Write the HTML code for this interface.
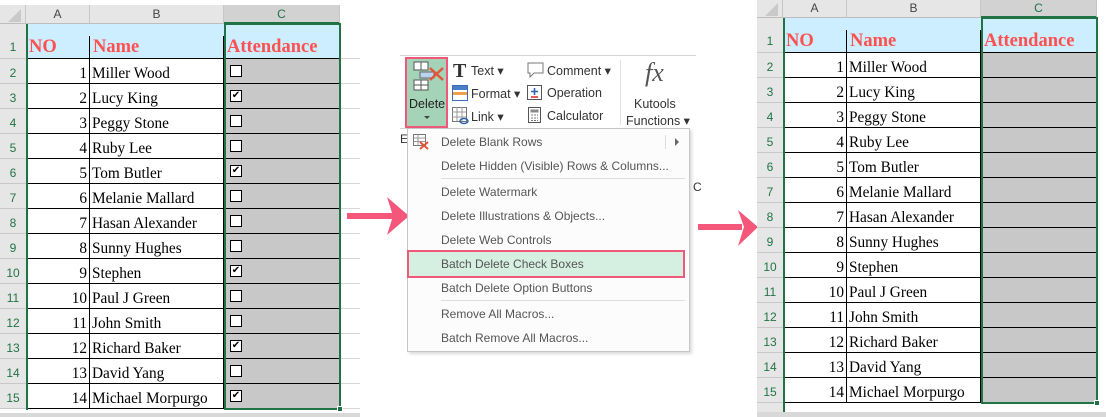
<!DOCTYPE html>
<html><head><meta charset="utf-8">
<style>
*{margin:0;padding:0;box-sizing:border-box}
body{width:1106px;height:417px;background:#fff;position:relative;overflow:hidden;font-family:"Liberation Sans",sans-serif}
.sheet{position:absolute;width:360px;height:420px;overflow:hidden}
.ch{position:absolute;top:5px;height:19px;background:#e6e6e6;border-right:1px solid #c6c6c6;border-bottom:1px solid #bdbdbd;font-size:12px;color:#444;text-align:center;line-height:19px}
.rh{position:absolute;left:0;width:26px;height:25px;line-height:29px;background:#e6e6e6;border-bottom:1px solid #c8c8c8;font-size:12px;color:#217346;text-align:center}
.grid{position:absolute;left:26px;top:24px;width:314px;font-family:"Liberation Serif",serif;font-size:15.3px}
.r{display:flex;height:25px;border-bottom:1px solid #000;line-height:29px;white-space:nowrap}
.r>div{border-right:1px solid #000;overflow:hidden;padding:0 2px 0 2px}
.r .a{width:64px;text-align:right}
.r .b{width:134px}
.r .c{width:116px;background:#c8c8c8;line-height:24px}
.r.h{height:35px;background:#cdeeff;color:#ff5050;font-weight:bold;font-size:18.5px;line-height:22px;align-items:flex-end;padding-bottom:0}
.r.h>div{padding-left:3px;text-align:left;background:#cdeeff;line-height:22px}
.cb{display:inline-block;width:12px;height:12px;border:1px solid #000;background:#fff;vertical-align:middle;margin-left:4px;margin-top:-1px;font-size:10px;line-height:10px;text-align:center;font-family:"DejaVu Sans",sans-serif}
.sel{position:absolute;left:224px;top:23px;width:117px;height:387px;border:2px solid #217346}
.gl{position:absolute;left:26px;top:24px;width:2px;height:386px;background:#217346}
.mi{position:absolute;left:441px;font-size:12px;color:#555}
.rb{position:absolute;font-size:12.5px;color:#333}
</style></head><body>

<!-- LEFT SHEET -->
<div class="sheet" style="left:0;top:0;height:412px">
  <div style="position:absolute;left:0;top:5px;width:26px;height:19px;background:#e6e6e6;border-right:1px solid #c6c6c6;border-bottom:1px solid #bdbdbd"></div>
  <div style="position:absolute;left:8px;top:9px;width:0;height:0;border-left:13px solid transparent;border-bottom:13px solid #c9c9c9"></div>
  <div class="ch" style="left:26px;width:64px">A</div>
  <div class="ch" style="left:90px;width:134px">B</div>
  <div class="ch" style="left:224px;width:116px;background:#d2d2d2;color:#217346;border-bottom:2px solid #217346">C</div>
  <div style="position:absolute;left:340px;top:24px;width:20px;height:390px;background:repeating-linear-gradient(#fff 0 24px,#d8d8d8 24px 25px);background-position:0 10px"></div>
  <div class="rh" style="top:24px;height:35px;line-height:46px">1</div>
  <div class="rh" style="top:59px">2</div>
  <div class="rh" style="top:84px">3</div>
  <div class="rh" style="top:109px">4</div>
  <div class="rh" style="top:134px">5</div>
  <div class="rh" style="top:159px">6</div>
  <div class="rh" style="top:184px">7</div>
  <div class="rh" style="top:209px">8</div>
  <div class="rh" style="top:234px">9</div>
  <div class="rh" style="top:259px">10</div>
  <div class="rh" style="top:284px">11</div>
  <div class="rh" style="top:309px">12</div>
  <div class="rh" style="top:334px">13</div>
  <div class="rh" style="top:359px">14</div>
  <div class="rh" style="top:384px">15</div>
  <div class="grid">
    <div class="r h"><div class="a">NO</div><div class="b">Name</div><div class="c">Attendance</div></div>
    <div class="r"><div class="a">1</div><div class="b">Miller Wood</div><div class="c"><span class="cb"></span></div></div>
    <div class="r"><div class="a">2</div><div class="b">Lucy King</div><div class="c"><span class="cb">✔</span></div></div>
    <div class="r"><div class="a">3</div><div class="b">Peggy Stone</div><div class="c"><span class="cb"></span></div></div>
    <div class="r"><div class="a">4</div><div class="b">Ruby Lee</div><div class="c"><span class="cb"></span></div></div>
    <div class="r"><div class="a">5</div><div class="b">Tom Butler</div><div class="c"><span class="cb">✔</span></div></div>
    <div class="r"><div class="a">6</div><div class="b">Melanie Mallard</div><div class="c"><span class="cb"></span></div></div>
    <div class="r"><div class="a">7</div><div class="b">Hasan Alexander</div><div class="c"><span class="cb"></span></div></div>
    <div class="r"><div class="a">8</div><div class="b">Sunny Hughes</div><div class="c"><span class="cb"></span></div></div>
    <div class="r"><div class="a">9</div><div class="b">Stephen</div><div class="c"><span class="cb">✔</span></div></div>
    <div class="r"><div class="a">10</div><div class="b">Paul J Green</div><div class="c"><span class="cb"></span></div></div>
    <div class="r"><div class="a">11</div><div class="b">John Smith</div><div class="c"><span class="cb"></span></div></div>
    <div class="r"><div class="a">12</div><div class="b">Richard Baker</div><div class="c"><span class="cb">✔</span></div></div>
    <div class="r"><div class="a">13</div><div class="b">David Yang</div><div class="c"><span class="cb"></span></div></div>
    <div class="r"><div class="a">14</div><div class="b">Michael Morpurgo</div><div class="c"><span class="cb">✔</span></div></div>
  </div>
  <div class="gl"></div>
  <div class="sel"></div>
  <div style="position:absolute;left:337px;top:406px;width:6px;height:6px;background:#217346;border:1px solid #fff"></div>
</div>
<div style="position:absolute;left:0;top:413px;width:360px;height:4px;background:#d8d8d8"></div>

<!-- LEFT ARROW -->
<svg style="position:absolute;left:340px;top:190px" width="80" height="50"><rect x="7" y="23" width="48" height="6" fill="#f5577a"/><path d="M47 7 L69 26 L47 45 L53 26 Z" fill="#f5577a"/></svg>

<!-- MIDDLE RIBBON -->
<div style="position:absolute;left:400px;top:55px;width:296px;height:1px;background:#d4d4d4"></div>
<div style="position:absolute;left:400px;top:128px;width:8px;height:1px;background:#d4d4d4"></div>
<div style="position:absolute;left:400px;top:132px;font-size:12px;color:#333">E</div>
<div style="position:absolute;left:405px;top:57px;width:43px;height:71px;background:#a5d3b7;border:2px solid #f0587a"></div>
<svg style="position:absolute;left:410px;top:60px" width="36" height="34"><rect x="4" y="2" width="14" height="8" fill="#fff" stroke="#555"/><line x1="11" y1="2" x2="11" y2="10" stroke="#555"/><rect x="10" y="12" width="14" height="6" fill="#b9d3f0" stroke="#666"/><rect x="4" y="20" width="14" height="10" fill="#fff" stroke="#555"/><line x1="11" y1="20" x2="11" y2="30" stroke="#555"/><line x1="4" y1="25" x2="18" y2="25" stroke="#555"/><path d="M20 8 L33 20 M33 8 L20 20" stroke="#e2563a" stroke-width="2.5"/></svg>
<div style="position:absolute;left:409px;top:97px;font-size:12.5px;color:#222">Delete</div>
<div style="position:absolute;left:424px;top:116px;width:0;height:0;border-left:3px solid transparent;border-right:3px solid transparent;border-top:3px solid #444"></div>

<div style="position:absolute;left:453px;top:60px;font-family:'Liberation Serif',serif;font-weight:bold;font-size:20px;color:#333">T</div>
<div class="rb" style="left:471px;top:63px">Text ▾</div>
<svg style="position:absolute;left:452px;top:85px" width="16" height="16"><rect x="0.5" y="0.5" width="15" height="15" fill="#fff" stroke="#3a6fb8"/><rect x="1" y="1" width="14" height="4" fill="#4a7fc8"/><rect x="1" y="7" width="14" height="3" fill="#f2a04a"/></svg>
<div class="rb" style="left:471px;top:86px">Format ▾</div>
<svg style="position:absolute;left:452px;top:107px" width="18" height="18"><rect x="0.5" y="0.5" width="14" height="14" fill="#fff" stroke="#777"/><path d="M5 0v14M10 0v14M0 5h14M0 10h14" stroke="#999"/><ellipse cx="12" cy="14" rx="4" ry="2.5" fill="none" stroke="#2a62b5" stroke-width="1.5"/></svg>
<div class="rb" style="left:471px;top:109px">Link ▾</div>
<svg style="position:absolute;left:527px;top:62px" width="18" height="16"><path d="M1 1h15v10H7l-4 4v-4H1z" fill="#fff" stroke="#777"/></svg>
<div class="rb" style="left:547px;top:63px">Comment ▾</div>
<svg style="position:absolute;left:527px;top:85px" width="16" height="16"><rect x="0.5" y="0.5" width="14" height="14" fill="#fff" stroke="#555"/><path d="M7.5 3v7M4 6.5h7" stroke="#2a62b5" stroke-width="1.6"/><path d="M4 12h7" stroke="#d33" stroke-width="1.6"/></svg>
<div class="rb" style="left:547px;top:86px">Operation</div>
<svg style="position:absolute;left:528px;top:107px" width="14" height="17"><rect x="0.5" y="0.5" width="12" height="15" fill="#fff" stroke="#555"/><rect x="2.5" y="2.5" width="8" height="3" fill="#888"/><path d="M3 8h2M6 8h2M9 8h1M3 11h2M6 11h2M9 11h1M3 13.5h2M6 13.5h2M9 13.5h1" stroke="#777"/></svg>
<div class="rb" style="left:547px;top:109px">Calculator</div>
<div style="position:absolute;left:620px;top:60px;width:1px;height:65px;background:#e0e0e0"></div>
<div style="position:absolute;left:645px;top:58px;font-family:'Liberation Serif',serif;font-style:italic;font-size:26px;color:#555">fx</div>
<div class="rb" style="left:634px;top:97px">Kutools</div>
<div class="rb" style="left:626px;top:113px">Functions ▾</div>
<div style="position:absolute;left:693px;top:180px;font-size:12px;color:#333">C</div>

<!-- MENU -->
<div style="position:absolute;left:407px;top:128px;width:283px;height:224px;background:#fcfcfc;border:1px solid #c6c6c6;box-shadow:2px 2px 3px rgba(0,0,0,.15)"></div>
<svg style="position:absolute;left:412px;top:133px" width="20" height="18"><rect x="1.5" y="1.5" width="12" height="11" fill="#fff" stroke="#777"/><path d="M1.5 5h12M1.5 8.5h12M6 1.5v11" stroke="#999"/><path d="M8 9l8 7M16 9l-8 7" stroke="#e2563a" stroke-width="2"/></svg>
<div style="position:absolute;left:665px;top:135px;width:1px;height:14px;background:#ddd"></div>
<div style="position:absolute;left:675px;top:138px;width:0;height:0;border-top:4px solid transparent;border-bottom:4px solid transparent;border-left:4px solid #666"></div>
<div class="mi" style="top:135px">Delete Blank Rows</div>
<div class="mi" style="top:159px">Delete Hidden (Visible) Rows &amp; Columns...</div>
<div style="position:absolute;left:441px;top:178px;width:244px;height:1px;background:#ddd"></div>
<div class="mi" style="top:185px">Delete Watermark</div>
<div class="mi" style="top:209px">Delete Illustrations &amp; Objects...</div>
<div class="mi" style="top:233px">Delete Web Controls</div>
<div style="position:absolute;left:407px;top:250px;width:278px;height:28px;background:#d5efe0;border:2px solid #f0587a"></div>
<div class="mi" style="top:257px">Batch Delete Check Boxes</div>
<div class="mi" style="top:281px">Batch Delete Option Buttons</div>
<div style="position:absolute;left:441px;top:300px;width:244px;height:1px;background:#ddd"></div>
<div class="mi" style="top:307px">Remove All Macros...</div>
<div class="mi" style="top:331px">Batch Remove All Macros...</div>

<!-- RIGHT ARROW -->
<svg style="position:absolute;left:690px;top:200px" width="75" height="55"><rect x="8" y="24" width="44" height="6" fill="#f5577a"/><path d="M48 10 L68 27 L48 46 L54 27 Z" fill="#f5577a"/></svg>

<!-- RIGHT SHEET -->
<div class="sheet" style="left:757px;top:-6px;width:349px;height:418px">
  <div style="position:absolute;left:0;top:5px;width:26px;height:19px;background:#e6e6e6;border-right:1px solid #c6c6c6;border-bottom:1px solid #bdbdbd"></div>
  <div style="position:absolute;left:8px;top:9px;width:0;height:0;border-left:13px solid transparent;border-bottom:13px solid #c9c9c9"></div>
  <div class="ch" style="left:26px;width:64px">A</div>
  <div class="ch" style="left:90px;width:134px">B</div>
  <div class="ch" style="left:224px;width:116px;background:#d2d2d2;color:#217346;border-bottom:2px solid #217346">C</div>
  <div class="rh" style="top:24px;height:35px;line-height:46px">1</div>
  <div class="rh" style="top:59px">2</div>
  <div class="rh" style="top:84px">3</div>
  <div class="rh" style="top:109px">4</div>
  <div class="rh" style="top:134px">5</div>
  <div class="rh" style="top:159px">6</div>
  <div class="rh" style="top:184px">7</div>
  <div class="rh" style="top:209px">8</div>
  <div class="rh" style="top:234px">9</div>
  <div class="rh" style="top:259px">10</div>
  <div class="rh" style="top:284px">11</div>
  <div class="rh" style="top:309px">12</div>
  <div class="rh" style="top:334px">13</div>
  <div class="rh" style="top:359px">14</div>
  <div class="rh" style="top:384px">15</div>
  <div class="rh" style="top:409px">16</div>
  <div class="grid">
    <div class="r h"><div class="a">NO</div><div class="b">Name</div><div class="c">Attendance</div></div>
    <div class="r"><div class="a">1</div><div class="b">Miller Wood</div><div class="c"></div></div>
    <div class="r"><div class="a">2</div><div class="b">Lucy King</div><div class="c"></div></div>
    <div class="r"><div class="a">3</div><div class="b">Peggy Stone</div><div class="c"></div></div>
    <div class="r"><div class="a">4</div><div class="b">Ruby Lee</div><div class="c"></div></div>
    <div class="r"><div class="a">5</div><div class="b">Tom Butler</div><div class="c"></div></div>
    <div class="r"><div class="a">6</div><div class="b">Melanie Mallard</div><div class="c"></div></div>
    <div class="r"><div class="a">7</div><div class="b">Hasan Alexander</div><div class="c"></div></div>
    <div class="r"><div class="a">8</div><div class="b">Sunny Hughes</div><div class="c"></div></div>
    <div class="r"><div class="a">9</div><div class="b">Stephen</div><div class="c"></div></div>
    <div class="r"><div class="a">10</div><div class="b">Paul J Green</div><div class="c"></div></div>
    <div class="r"><div class="a">11</div><div class="b">John Smith</div><div class="c"></div></div>
    <div class="r"><div class="a">12</div><div class="b">Richard Baker</div><div class="c"></div></div>
    <div class="r"><div class="a">13</div><div class="b">David Yang</div><div class="c"></div></div>
    <div class="r"><div class="a">14</div><div class="b">Michael Morpurgo</div><div class="c"></div></div>
  </div>
  <div class="gl" style="height:400px"></div>
  <div class="sel"></div>
  <div style="position:absolute;left:337px;top:406px;width:6px;height:6px;background:#217346;border:1px solid #fff"></div>
</div>
<div style="position:absolute;left:757px;top:412px;width:349px;height:5px;background:#d8d8d8"></div>
</body></html>
